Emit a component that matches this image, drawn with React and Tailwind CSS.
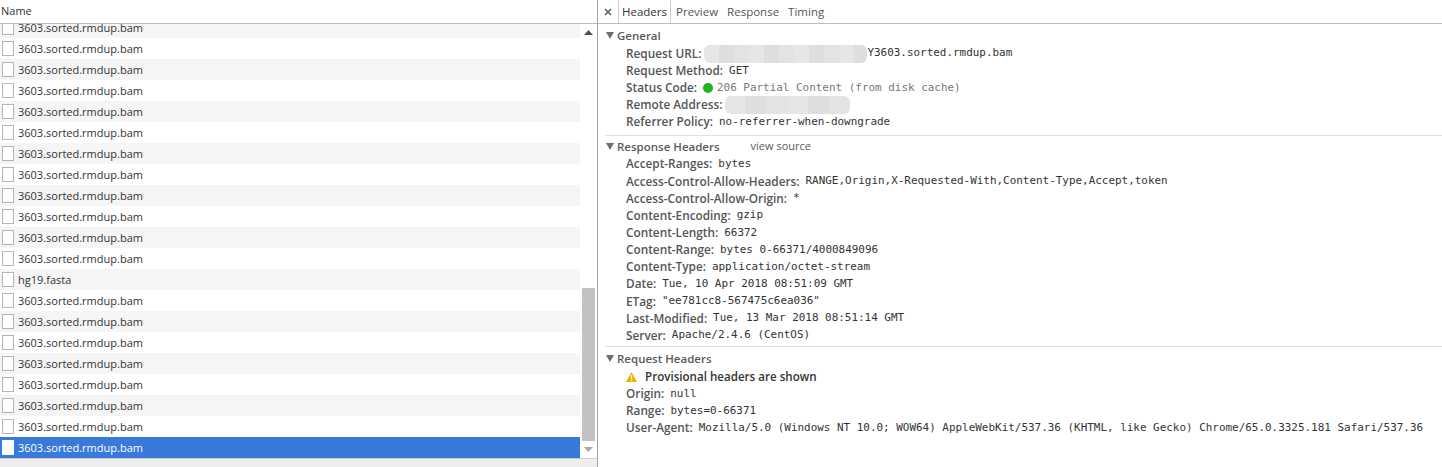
import React from 'react';

const uiFont = "font-['Open_Sans','Noto_Sans',sans-serif]";

// rows of the request list, first one is cut off by the header
const names = Array.from({ length: 21 }, (_, i) => (i === 12 ? 'hg19.fasta' : '3603.sorted.rmdup.bam'));

const general = [
  { k: 'Request URL', v: 'Y3603.sorted.rmdup.bam', blur: [15, 15, 15, 15, 15, 15, 15, 15, 15, 15, 13] },
  { k: 'Request Method', v: 'GET' },
  { k: 'Status Code', v: '206 Partial Content (from disk cache)', status: true },
  { k: 'Remote Address', v: '', blur: [20, 21, 21, 21, 21, 21] },
  { k: 'Referrer Policy', v: 'no-referrer-when-downgrade' },
];

const response = [
  ['Accept-Ranges', 'bytes'],
  ['Access-Control-Allow-Headers', 'RANGE,Origin,X-Requested-With,Content-Type,Accept,token'],
  ['Access-Control-Allow-Origin', '*'],
  ['Content-Encoding', 'gzip'],
  ['Content-Length', '66372'],
  ['Content-Range', 'bytes 0-66371/4000849096'],
  ['Content-Type', 'application/octet-stream'],
  ['Date', 'Tue, 10 Apr 2018 08:51:09 GMT'],
  ['ETag', '"ee781cc8-567475c6ea036"'],
  ['Last-Modified', 'Tue, 13 Mar 2018 08:51:14 GMT'],
  ['Server', 'Apache/2.4.6 (CentOS)'],
];

const request = [
  ['Origin', 'null'],
  ['Range', 'bytes=0-66371'],
  ['User-Agent', 'Mozilla/5.0 (Windows NT 10.0; WOW64) AppleWebKit/537.36 (KHTML, like Gecko) Chrome/65.0.3325.181 Safari/537.36'],
];

const shades = ['bg-[#f1f1f1]', 'bg-[#e6e6e6]', 'bg-[#f3f3f3]', 'bg-[#dedede]', 'bg-[#efefef]', 'bg-[#e3e3e3]'];

function FileIcon({ selected }) {
  return (
    <div
      className={`w-[12px] h-[15px] shrink-0 border ${selected ? 'bg-white border-white' : 'bg-white border-[#b4b4b4]'}`}
    />
  );
}

function Row({ name, index, selected }) {
  const bg = selected ? 'bg-[#3879d9] text-white' : index % 2 === 0 ? 'bg-[#f5f5f5] text-[#333]' : 'bg-white text-[#333]';
  return (
    <div className={`h-[21px] shrink-0 flex items-center pl-[2px] gap-[4px] text-[11px] leading-[21px] ${bg}`}>
      <FileIcon selected={selected} />
      <span>{name}</span>
    </div>
  );
}

function Scrollbar() {
  return (
    <div className="w-[17px] shrink-0 flex flex-col items-center bg-white">
      <svg width="9" height="5" viewBox="0 0 9 5" className="mt-[6px] shrink-0">
        <path d="M0 5 L4.5 0 L9 5 Z" fill="#505050" />
      </svg>
      <div className="mt-[253px] w-[13px] h-[153px] shrink-0 bg-[#c1c1c1]" />
      <svg width="9" height="5" viewBox="0 0 9 5" className="mt-[6px] shrink-0">
        <path d="M0 0 L9 0 L4.5 5 Z" fill="#a8a8a8" />
      </svg>
    </div>
  );
}

function Caret() {
  return (
    <svg width="8" height="7" viewBox="0 0 8 7" className="shrink-0">
      <path d="M0 0 L8 0 L4 7 Z" fill="#6e6e6e" />
    </svg>
  );
}

function SectionTitle({ title, extra }) {
  return (
    <div className="h-[19px] flex items-center pl-[7px] gap-[3px] text-[11.5px] font-semibold text-[#5a5a5a]">
      <Caret />
      <span>{title}</span>
      {extra && <span className="ml-[28px] font-normal text-[#5a5a5a] text-[11px]">{extra}</span>}
    </div>
  );
}

function Blur({ cells }) {
  return (
    <div className="ml-[3px] flex h-[18px] shrink-0 overflow-hidden rounded-[6px]">
      {cells.map((w, i) => (
        <div key={i} style={{ width: w + 'px' }} className={`h-full ${shades[(i * 2 + 1) % shades.length]}`} />
      ))}
    </div>
  );
}

function Header({ k, v, status, blur }) {
  return (
    <div className="h-[17.15px] flex items-center pl-[27px] whitespace-nowrap">
      <span className="text-[11.8px] font-semibold text-[#555]">{k}:</span>
      {blur && <Blur cells={blur} />}
      {status && <span className="ml-[6px] w-[10px] h-[10px] rounded-full bg-[#1fb51f] shrink-0" />}
      {v && (
        <span
          className={`font-['DejaVu_Sans_Mono',monospace] text-[10.95px] ${blur ? '' : status ? 'ml-[4px]' : 'ml-[6px]'} ${status ? 'text-[#777]' : 'text-[#333]'}`}
        >
          {v}
        </span>
      )}
    </div>
  );
}

export default function App() {
  return (
    <div className={`w-[1442px] h-[467px] flex overflow-hidden bg-white ${uiFont}`}>
      {/* request list */}
      <div className="w-[598px] shrink-0 flex flex-col border-r border-[#a3a3a3]">
        <div className="h-[24px] shrink-0 flex items-center pl-[1px] text-[11px] text-[#333] border-b border-[#bdbdbd]">
          Name
        </div>
        <div className="h-[434px] shrink-0 flex overflow-hidden">
          <div className="flex-1 flex flex-col -mt-[7px]">
            {names.map((n, i) => (
              <Row key={i} name={n} index={i} selected={i === 20} />
            ))}
          </div>
          <Scrollbar />
        </div>
        <div className="flex-1 bg-[#eeeeee] border-t border-[#cfcfcf]" />
      </div>

      {/* details */}
      <div className="flex-1 min-w-0 flex flex-col">
        <div className="h-[24px] shrink-0 flex items-stretch border-b border-[#bdbdbd] text-[11.5px] text-[#555]">
          <div className="w-[20px] flex items-center justify-center">
            <svg width="8" height="8" viewBox="0 0 8 8">
              <path d="M1 1 L7 7 M7 1 L1 7" stroke="#555" strokeWidth="1.4" />
            </svg>
          </div>
          <div className="px-[3px] flex items-center border-x border-[#cfcfcf] text-[#333]">Headers</div>
          <div className="pl-[5px] flex items-center">Preview</div>
          <div className="pl-[9px] flex items-center">Response</div>
          <div className="pl-[9px] flex items-center">Timing</div>
        </div>
        <div className="pl-[1px] pt-[2px] flex flex-col">
          <SectionTitle title="General" />
          {general.map((g) => (
            <Header key={g.k} {...g} />
          ))}
          <div className="ml-[6px] mt-[4px] mb-[1px] border-t border-[#e0e0e0]" />
          <SectionTitle title="Response Headers" extra="view source" />
          {response.map(([k, v]) => (
            <Header key={k} k={k} v={v} />
          ))}
          <div className="ml-[6px] mt-[2px] mb-[2px] border-t border-[#e0e0e0]" />
          <SectionTitle title="Request Headers" />
          <div className="h-[17px] flex items-center pl-[27px] gap-[8px] text-[11.6px] font-semibold text-[#333]">
            <svg width="11" height="10" viewBox="0 0 11 10" className="shrink-0">
              <path d="M5.5 0 L11 10 L0 10 Z" fill="#edb200" />
              <path d="M5.5 3 V6.8 M5.5 7.8 V9" stroke="#fff" strokeWidth="1.2" />
            </svg>
            <span>Provisional headers are shown</span>
          </div>
          {request.map(([k, v]) => (
            <Header key={k} k={k} v={v} />
          ))}
        </div>
      </div>
    </div>
  );
}
